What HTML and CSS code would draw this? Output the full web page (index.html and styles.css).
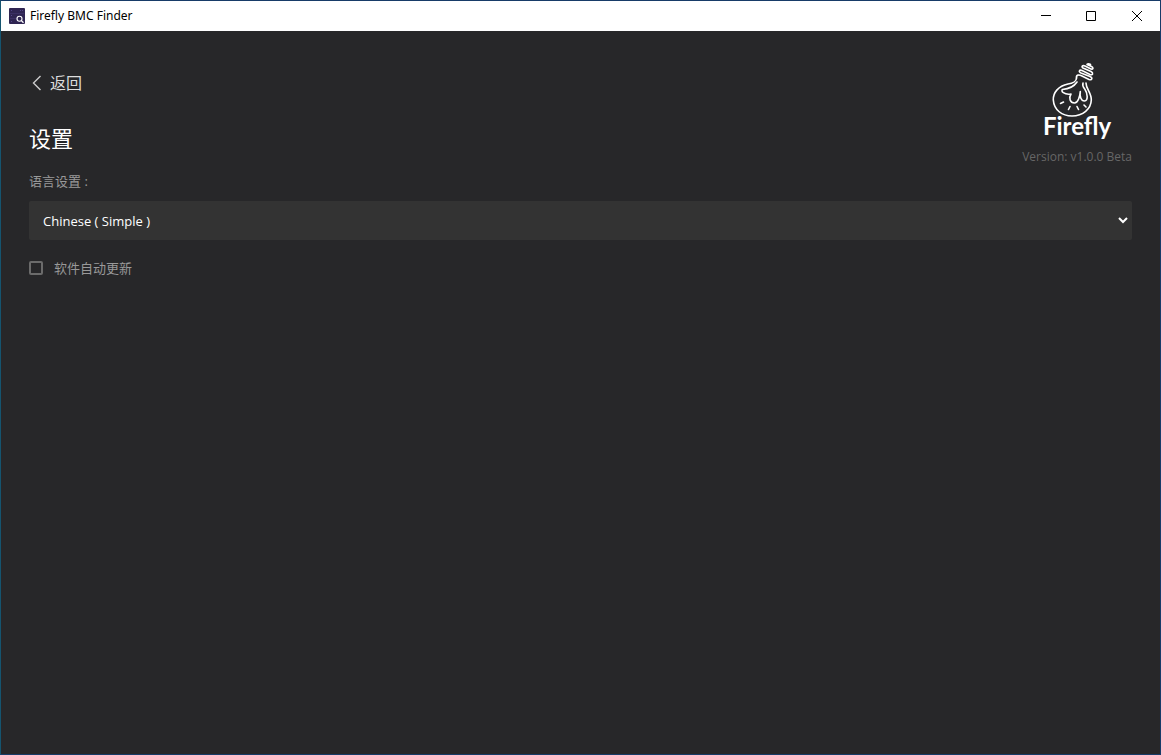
FILE: index.html
```html
<!DOCTYPE html>
<html lang="zh-CN">
<head>
    <meta charset="UTF-8">
    <meta name="viewport" content="width=device-width, initial-scale=1.0">
    <title>Firefly BMC Finder</title>
    <link rel="stylesheet" href="styles.css">
</head>
<body>
    <!-- Window title bar -->
    <div class="titlebar">
        <svg class="app-icon" width="16" height="16" viewBox="0 0 16 16">
            <rect width="16" height="16" rx="1" fill="#2f2552"/>
            <path d="M1 5.5h14M1 10.5h7" stroke="#3b3063"/>
            <path d="M2 2.5h1M2 7.5h1M2 13.5h1M11 2.5h1M13 2.5h1" stroke="#54478a"/>
            <circle cx="10.5" cy="10.8" r="2.5" fill="none" stroke="#fff" stroke-width="1.1"/>
            <path d="M12.5 12.7l2 2" stroke="#fff" stroke-width="1.3"/>
        </svg>
        <span class="app-title">Firefly BMC Finder</span>
        <div class="window-buttons">
            <button type="button" aria-label="最小化">
                <svg width="11" height="11" viewBox="0 0 11 11"><path d="M1 4.5h10"/></svg>
            </button>
            <button type="button" aria-label="最大化">
                <svg width="11" height="11" viewBox="0 0 11 11"><path d="M.5 .5h9v9h-9z"/></svg>
            </button>
            <button type="button" aria-label="关闭">
                <svg width="11" height="11" viewBox="0 0 11 11"><path d="M0 0l10 10M10 0L0 10"/></svg>
            </button>
        </div>
    </div>

    <div class="content">
        <div class="header">
            <div class="heading">
                <button type="button" class="back-btn">
                    <svg width="10" height="16" viewBox="0 0 10 16"><path d="M8.5 1L1.5 8l7 7"/></svg>
                    返回
                </button>
                <h1>设置</h1>
            </div>

            <div class="brand">
                <svg class="bulb" width="64" height="56" viewBox="0 0 64 56">
                    <!-- Glass -->
                    <path d="M31.500 20C31.500 23 28 25.500 23 26C13 28 8 35 8.300 42C9 52 17 58 27 58C38 58 46 51 46.300 42C46.500 35 41 31 41 25"/>
                    <!-- Screw thread -->
                    <path d="M31.500 20C31 16.500 34 16.500 37 18L44 21.500C47 22.500 48 20 45 18.500L36 15C33 13.500 34.500 11.500 37 12.500L45 16.500C48 17.500 48.500 15 46 13.500L38 10C36 8.500 37.500 7 40 8L46 11C48.500 11.500 48.500 9.500 46.500 8.500L42 6.500C42 5.500 44 5.500 45.500 6.500"/>
                    <!-- Wings -->
                    <path d="M32 24C28 30 23 31 17.500 31.500C15.500 33 19 37 26 36C23.500 40 25 45 29.500 45C33 45 35 38 35.300 33.500C34.500 38 36 43 39.500 43C43.500 43 42.500 35 40 31.500C38 29 37 28 38 25"/>
                    <!-- Light rays -->
                    <path d="M15.500 45.500l3-1.500M23.500 51.500l1.500-3M33.500 51.500l-1.500-3M41 49l-2-2"/>
                </svg>
                <span class="brand-name">Firefly</span>
                <span class="version">Version: v1.0.0 Beta</span>
            </div>
        </div>

        <form class="settings">
            <label class="field-label" for="language">语言设置 :</label>
            <div class="select-wrap">
                <select id="language">
                    <option selected>Chinese ( Simple )</option>
                    <option>English</option>
                </select>
                <svg class="arrow" width="10" height="8" viewBox="0 0 10 8"><path d="M1 2l4 4 4-4"/></svg>
            </div>
            <label class="check-row">
                <input type="checkbox">
                软件自动更新
            </label>
        </form>
    </div>
</body>
</html>
```

FILE: styles.css
```css
* {
    box-sizing: border-box;
}
body {
    margin: 0;
    min-height: 100vh;
    display: flex;
    flex-direction: column;
    font-family: "Open Sans", "Noto Sans CJK SC", sans-serif;
    font-size: 13px;
    color: #999;
    background: #272729;
    border: 1px solid #173b68;
    border-left-color: #15546f;
}
button {
    padding: 0;
    border: none;
    background: none;
    font-family: inherit;
    cursor: pointer;
}
svg {
    fill: none;
}

/* Title bar */
.titlebar {
    display: flex;
    align-items: center;
    height: 30px;
    padding-left: 8px;
    background: #fff;
    color: #000;
}
.app-title {
    margin-left: 5px;
    padding-bottom: 2px;
    font-family: "Noto Sans", sans-serif;
    font-size: 12px;
}
.window-buttons {
    display: flex;
    align-self: stretch;
    margin-left: auto;
}
.window-buttons button {
    display: flex;
    align-items: center;
    justify-content: center;
    width: 46px;
}
.window-buttons svg {
    stroke: #000;
}

/* Page */
.content {
    flex: 1;
    padding: 27px 28px;
}
.header {
    display: flex;
    justify-content: space-between;
    align-items: flex-start;
}
.heading {
    padding-top: 13px;
}
.back-btn {
    display: flex;
    align-items: center;
    gap: 8px;
    padding-left: 3px;
    font-size: 16px;
    line-height: 24px;
    color: #ddd;
}
.back-btn svg {
    stroke: #ccc;
    stroke-width: 1.4;
}
h1 {
    margin: 27px 0 0;
    font-size: 22px;
    font-weight: 400;
    line-height: 32px;
    color: #fff;
}
.brand {
    display: flex;
    flex-direction: column;
    align-items: center;
}
.bulb {
    overflow: visible;
    stroke: #fff;
    stroke-width: 1.6;
    stroke-linecap: round;
    stroke-linejoin: round;
}
.brand-name {
    font-family: "Lato", sans-serif;
    font-size: 24px;
    font-weight: 700;
    line-height: 24px;
    color: #fff;
}
.version {
    margin-top: 8px;
    font-size: 12px;
    line-height: 22px;
    color: #666;
}

/* Settings form */
.settings {
    display: flex;
    flex-direction: column;
    align-items: flex-start;
    padding-top: 3px;
}
.field-label {
    line-height: 20px;
    margin-bottom: 10px;
}
.select-wrap {
    position: relative;
    width: 100%;
}
select {
    appearance: none;
    display: block;
    width: 100%;
    height: 39px;
    padding: 0 14px;
    border: none;
    border-radius: 2px;
    background: #333;
    font-family: inherit;
    font-size: 13px;
    font-weight: 500;
    color: #fff;
}
.arrow {
    position: absolute;
    top: 15px;
    right: 4px;
    stroke: #fff;
    stroke-width: 2;
    pointer-events: none;
}
.check-row {
    display: flex;
    align-items: center;
    gap: 11px;
    margin-top: 18px;
    line-height: 20px;
}
.check-row input {
    appearance: none;
    width: 14px;
    height: 14px;
    margin: 0;
    border: 2px solid #6b6b6b;
    border-radius: 2px;
}
.check-row input:checked {
    background: #999;
}
```
